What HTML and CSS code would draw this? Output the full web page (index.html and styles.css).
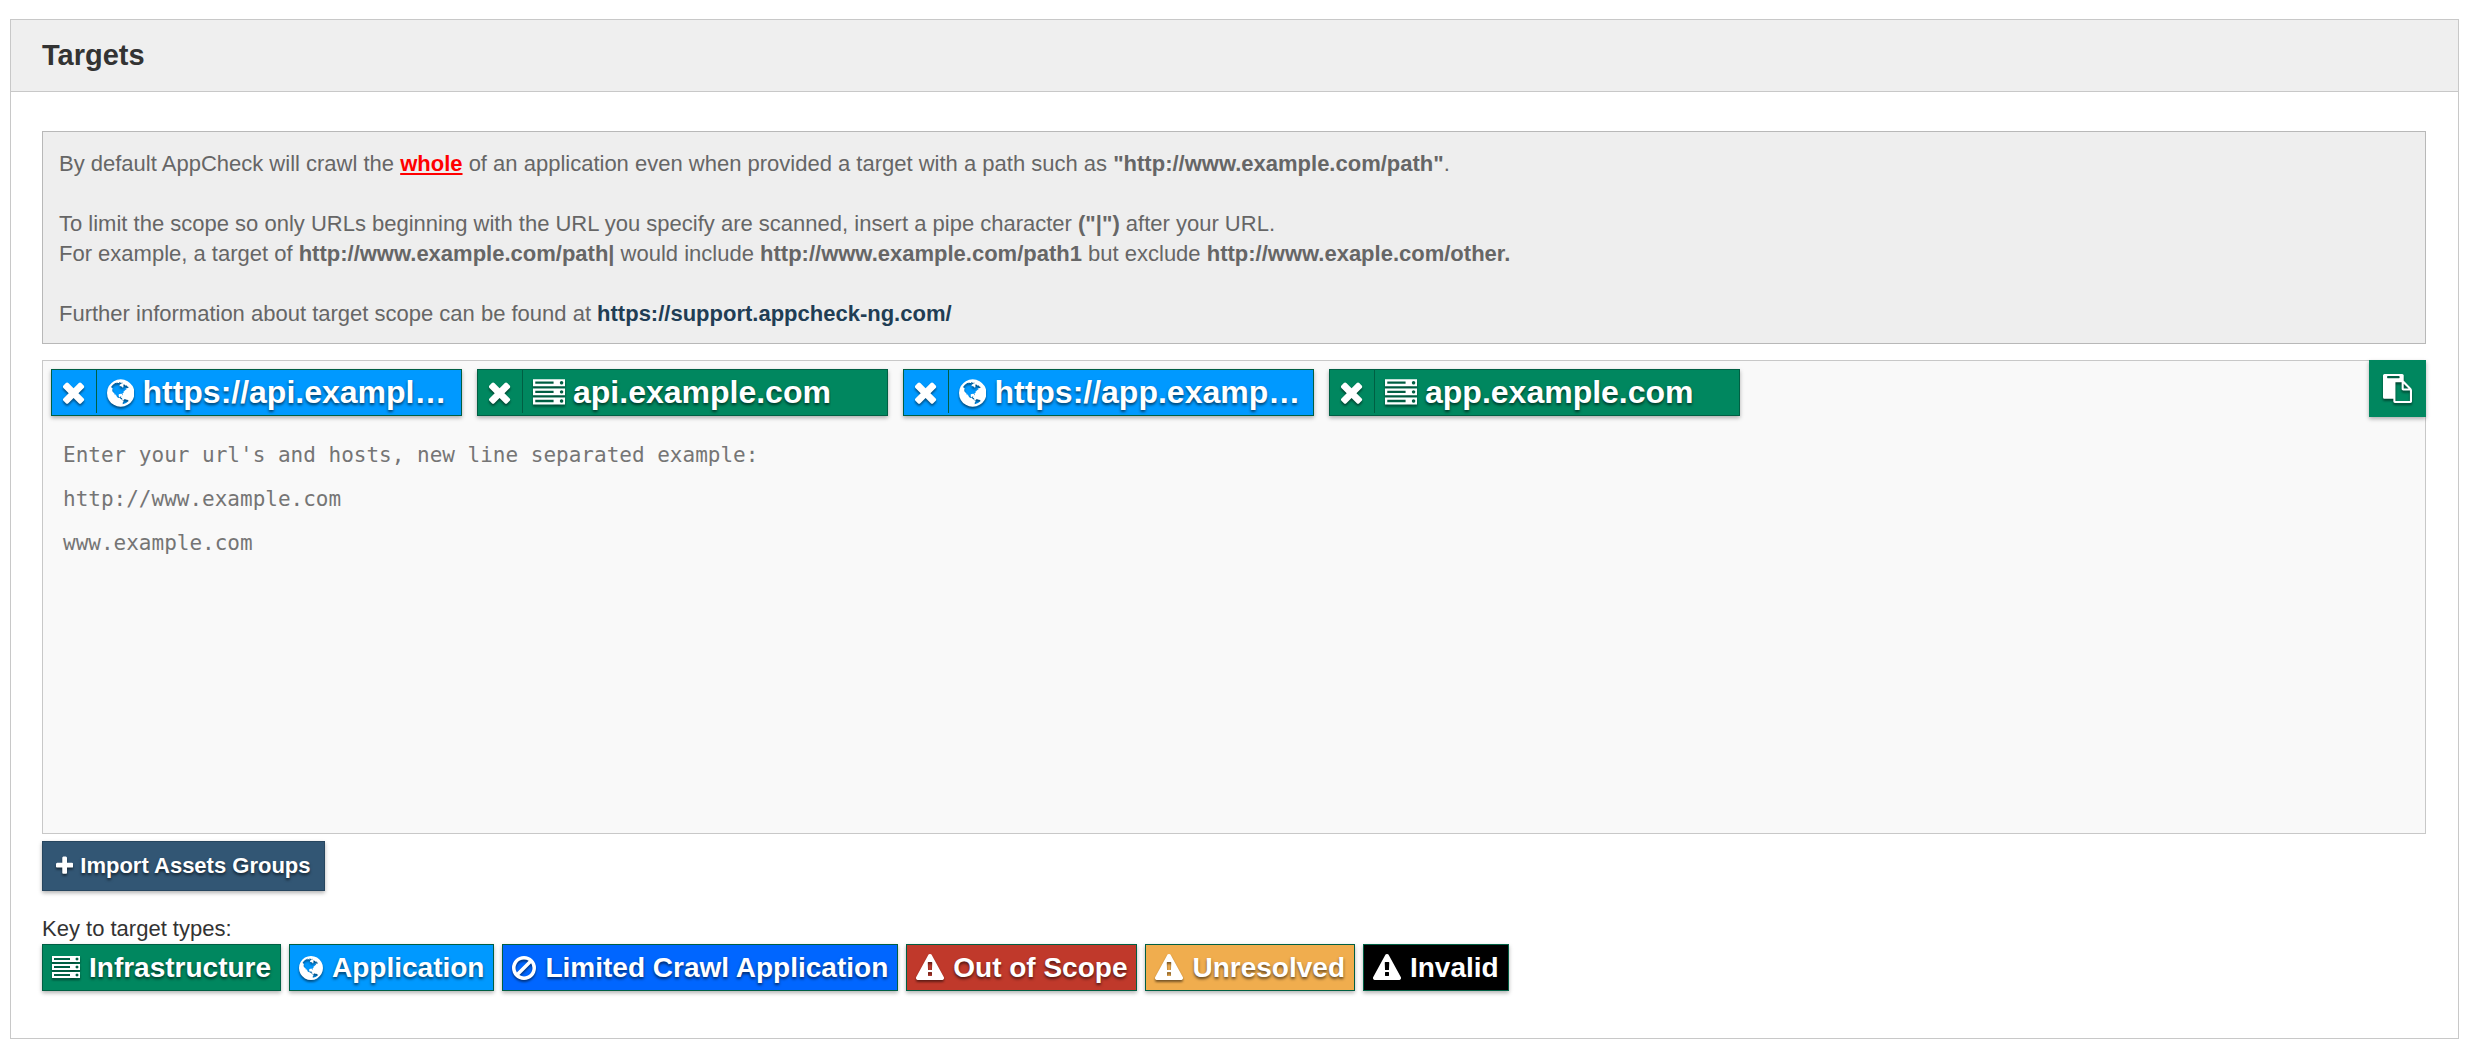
FILE: index.html
```html
<!DOCTYPE html>
<html lang="en">
  <head>
    <meta charset="UTF-8" />
    <meta name="viewport" content="width=device-width, initial-scale=1.0" />
    <title>Targets</title>
    <link rel="stylesheet" href="styles.css">
  </head>
  <body>
    <!-- Icon set -->
    <svg class="icon-defs" aria-hidden="true">
      <symbol id="i-times" viewBox="192 0 1408 1792"><path d="M1490 1322q0 40-28 68l-136 136q-28 28-68 28t-68-28l-294-294-294 294q-28 28-68 28t-68-28l-136-136q-28-28-28-68t28-68l294-294-294-294q-28-28-28-68t28-68l136-136q28-28 68-28t68 28l294 294 294-294q28-28 68-28t68 28l136 136q28 28 28 68t-28 68l-294 294 294 294q28 28 28 68z"/></symbol>
      <symbol id="i-plus" viewBox="192 0 1408 1792"><path d="M1600 736v192q0 40-28 68t-68 28h-416v416q0 40-28 68t-68 28h-192q-40 0-68-28t-28-68v-416h-416q-40 0-68-28t-28-68v-192q0-40 28-68t68-28h416v-416q0-40 28-68t68-28h192q40 0 68 28t28 68v416h416q40 0 68 28t28 68z"/></symbol>
      <symbol id="i-ban" viewBox="128 0 1536 1792"><path d="M1440 893q0-161-87-295l-754 753q137 89 297 89 111 0 211.500-43.500t173.500-116.500 116-174.500 43-212.500zm-999 299l755-754q-135-91-300-91-148 0-273 73t-198 199-73 274q0 162 89 299zm1223-299q0 157-61 300t-163.500 246-245 164-298.500 61-298.500-61-245-164-163.500-246-61-300 61-299.500 163.500-245.500 245-164 298.500-61 298.500 61 245 164 163.500 245.500 61 299.500z"/></symbol>
      <symbol id="i-warning" viewBox="0 0 1792 1792"><path d="M1024 1375v-190q0-14-9.500-23.500t-22.500-9.500h-192q-13 0-22.500 9.500t-9.500 23.500v190q0 14 9.500 23.500t22.500 9.500h192q13 0 22.500-9.500t9.500-23.500zm-2-374l18-459q0-12-10-19-13-11-24-11h-220q-11 0-24 11-10 7-10 21l17 457q0 10 10 16.500t24 6.500h185q14 0 23.500-6.500t10.500-16.500zm-14-934l768 1408q35 63-2 126-17 29-46.500 46t-63.500 17h-1536q-34 0-63.500-17t-46.500-46q-37-63-2-126l768-1408q17-31 47-49t65-18 65 18 47 49z"/></symbol>
      <symbol id="i-paste" viewBox="0 0 1792 1792"><path d="M768 1664h896v-640h-416q-40 0-68-28t-28-68v-416h-384v1152zm256-1440v-64q0-13-9.500-22.500t-22.500-9.500h-704q-13 0-22.500 9.500t-9.500 22.500v64q0 13 9.500 22.500t22.500 9.500h704q13 0 22.500-9.500t9.500-22.500zm256 672h299l-299-299v299zm512 128v672q0 40-28 68t-68 28h-960q-40 0-68-28t-28-68v-160h-544q-40 0-68-28t-28-68v-1344q0-40 28-68t68-28h1088q40 0 68 28t28 68v328q21 13 36 28l408 408q28 28 48 76t20 88z"/></symbol>
      <symbol id="i-server" viewBox="0 0 1792 1792"><path d="M128 1408h1024v-128h-1024v128zm0-512h1024v-128h-1024v128zm1568 448q0-40-28-68t-68-28-68 28-28 68 28 68 68 28 68-28 28-68zm-1568-960h1024v-128h-1024v128zm1568 448q0-40-28-68t-68-28-68 28-28 68 28 68 68 28 68-28 28-68zm0-512q0-40-28-68t-68-28-68 28-28 68 28 68 68 28 68-28 28-68zm96 832v384h-1792v-384h1792zm0-512v384h-1792v-384h1792zm0-512v384h-1792v-384h1792z"/></symbol>
      <symbol id="i-globe" viewBox="128 0 1536 1792"><path d="M896 128q209 0 385.500 103t279.500 279.500 103 385.500-103 385.500-279.500 279.500-385.500 103-385.500-103-279.500-279.500-103-385.500 103-385.500 279.500-279.500 385.500-103zm274 521q-2 1-9.500 9.500t-13.500 9.500q2 0 4.500-5t5-11 3.500-7q6-7 22-15 14-6 52-12 34-8 51 11-2-2 9.500-13t14.500-12q3-2 15-4.500t15-7.500l2-22q-12 1-17.500-7t-6.500-21q0 2-6 8 0-7-4.500-8t-11.500 1-9 1q-10-3-15-7.500t-8-16.500-4-15q-2-5-9.500-11t-9.500-10q-1-2-2.500-5.500t-3-6.500-4-5.500-5.500-2.500-7 5-7.500 10-4.500 5q-3-2-6-1.500t-4.500 1-4.500 3-5 3.500q-3 2-8.500 3t-8.500 2q15-5-1-11-10-4-16-3 9-4 7.500-12t-8.500-14h5q-1-4-8.500-8.500t-17.500-8.500-13-6q-8-5-34-9.500t-33-.5q-5 6-4.500 10.500t4 14 3.500 12.500q1 6-5.500 13t-6.500 12q0 7 14 15.500t10 21.500q-3 8-16 16t-16 12q-5 8-1.500 18.500t10.500 16.500q2 2 1.500 4t-3.500 4.500-5.500 4-6.500 3.500l-3 2q-11 5-20.500-6t-13.500-26q-7-25-16-30-23-8-29 1-5-13-41-26-25-9-58-4 6-1 0-15-7-15-19-12 3-6 4-17.500t1-13.500q3-13 12-23 1-1 7-8.500t9.500-13.500.5-6q35 4 50-11 5-5 11.500-17t10.500-17q9-6 14-5.500t14.500 5.500 14.500 5q14 1 15.500-11t-7.500-20q12 1 3-17-4-7-8-9-12-4-27 5-8 4 2 8-1-1-9.500 10.500t-16.500 17.500-16-5q-1-1-5.500-13.500t-9.500-13.500q-8 0-16 15 3-8-11-15t-24-8q19-12-8-27-7-4-20.500-5t-19.500 4q-5 7-5.500 11.500t5 8 10.500 5.500 11.500 4 8.500 3q14 10 8 14-2 1-8.500 3.500t-11.500 4.500-6 4q-3 4 0 14t-2 14q-5-5-9-17.500t-7-16.500q7 9-25 6l-10-1q-4 0-16 2t-20.500 1-13.500-8q-4-8 0-20 1-4 4-2-4-3-11-9.500t-10-8.500q-46 15-94 41 6 1 12-1 5-2 13-6.500t10-5.500q34-14 42-7l5-5q14 16 20 25-7-4-30-1-20 6-22 12 7 12 5 18-4-3-11.500-10t-14.500-11-15-5q-16 0-22 1-146 80-235 222 7 7 12 8 4 1 5 9t2.500 11 11.500-3q9 8 3 19 1-1 44 27 19 17 21 21 3 11-10 18-1-2-9-9t-9-4q-3 5 .5 18.500t10.500 12.500q-7 0-9.500 16t-2.500 35.500-1 23.500l2 1q-3 12 5.500 34.500t21.500 19.500q-13 3 20 43 6 8 8 9 3 2 12 7.500t15 10 10 10.500q4 5 10 22.500t14 23.500q-2 6 9.500 20t10.500 23q-1 0-2.500 1t-2.500 1q3 7 15.500 14t15.500 13q1 3 2 10t3 11 8 2q2-20-24-62-15-25-17-29-3-5-5.500-15.500t-4.500-14.500q2 0 6 1.500t8.500 3.500 7.500 4 2 3q-3 7 2 17.500t12 18.500 17 19 12 13q6 6 14 19.500t0 13.500q9 0 20 10t17 20q5 8 8 26t5 24q2 7 8.500 13.500t12.500 9.500l16 8 13 7q5 2 18.500 10.500t21.500 11.500q10 4 16 4t14.500-2.500 13.500-3.500q15-2 29 15t21 21q36 19 55 11-2 1 .5 7.500t8 15.500 9 14.500 5.500 8.500q5 6 18 15t18 15q6-4 7-9-3 8 7 20t18 10q14-3 14-32-31 15-49-18 0-1-2.500-5.500t-4-8.500-2.500-8.500 0-7.500 5-3q9 0 10-3.500t-2-12.500-4-13q-1-8-11-20t-12-15q-5 9-16 8t-16-9q0 1-1.500 5.500t-1.500 6.500q-13 0-15-1 1-3 2.500-17.500t3.500-22.500q1-4 5.500-12t7.500-14.500 4-12.500-4.500-9.500-17.500-2.500q-19 1-26 20-1 3-3 10.500t-5 11.500-9 7q-7 3-24 2t-24-5q-13-8-22.500-29t-9.500-37q0-10 2.500-26.500t3-25-5.500-24.500q3-2 9-9.500t10-10.500q2-1 4.500-1.500t4.500 0 4-1.500 3-6q-1-1-4-3-3-3-4-3 7 3 28.500-1.500t27.500 1.500q15 11 22-2 0-1-2.500-9.500t-.5-13.500q5 27 29 9 3 3 15.500 5t17.500 5q3 2 7 5.500t5.500 4.500 5-.5 8.500-6.500q10 14 12 24 11 40 19 44 7 3 11 2t4.500-9.500 0-14-1.500-12.500l-1-8v-18l-1-8q-15-3-18.500-12t1.500-18.500 15-18.500q1-1 8-3.500t15.500-6.500 12.500-8q21-19 15-35 7 0 11-9-1 0-5-3t-7.500-5-4.500-2q9-5 2-16 5-3 7.500-11t7.500-10q9 12 21 2 7-8 1-16 5-7 20.500-10.500t18.500-9.500q7 2 8-2t1-12 3-12q4-5 15-9t13-5l17-11q3-4 0-4 18 2 31-11 10-11-6-20 3-6-3-9.500t-15-5.500q3-1 11.500-.5t10.500-1.500q15-10-7-16-17-5-43 12zm-163 877q206-36 351-189-3-3-12.500-4.500t-12.500-3.500q-18-7-24-8 1-7-2.500-13t-8-9-12.500-8-11-7q-2-2-7-6t-7-5.500-7.500-4.500-8.500-2-10 1l-3 1q-3 1-5.500 2.500t-5.500 3-4 3 0 2.500q-21-17-36-22-5-1-11-5.500t-10.500-7-10-1.500-11.500 7q-5 5-6 15t-2 13q-7-5 0-17.500t2-18.500q-3-6-10.500-4.500t-12 4.500-11.500 8.500-9 6.500-8.500 5.500-8.500 7.500q-3 4-6 12t-5 11q-2-4-11.500-6.500t-9.500-5.500q2 10 4 35t5 38q7 31-12 48-27 25-29 40-4 22 12 26 0 7-8 20.500t-7 21.500q0 6 2 16z"/></symbol>
    </svg>

    <section class="panel">
      <header class="panel-header">
        <h2>Targets</h2>
      </header>
      <div class="panel-body">
        <div class="info">
          <p>By default AppCheck will crawl the <strong class="warn">whole</strong> of an application even when provided a target with a path such as <strong>"http://www.example.com/path"</strong>.</p>
          <p>To limit the scope so only URLs beginning with the URL you specify are scanned, insert a pipe character <strong>("|")</strong> after your URL.<br />
          For example, a target of <strong>http://www.example.com/path|</strong> would include <strong>http://www.example.com/path1</strong> but exclude <strong>http://www.exaple.com/other.</strong></p>
          <p>Further information about target scope can be found at <a href="https://support.appcheck-ng.com/">https://support.appcheck-ng.com/</a></p>
        </div>

        <div class="targets">
          <ul class="tags">
            <li class="tag application" title="https://api.example.com">
              <button type="button" aria-label="Remove"><svg class="icon narrow"><use href="#i-times"/></svg></button>
              <svg class="icon round"><use href="#i-globe"/></svg>
              <span>https://api.exampl…</span>
            </li>
            <li class="tag infrastructure" title="api.example.com">
              <button type="button" aria-label="Remove"><svg class="icon narrow"><use href="#i-times"/></svg></button>
              <svg class="icon"><use href="#i-server"/></svg>
              <span>api.example.com</span>
            </li>
            <li class="tag application" title="https://app.example.com">
              <button type="button" aria-label="Remove"><svg class="icon narrow"><use href="#i-times"/></svg></button>
              <svg class="icon round"><use href="#i-globe"/></svg>
              <span>https://app.examp…</span>
            </li>
            <li class="tag infrastructure" title="app.example.com">
              <button type="button" aria-label="Remove"><svg class="icon narrow"><use href="#i-times"/></svg></button>
              <svg class="icon"><use href="#i-server"/></svg>
              <span>app.example.com</span>
            </li>
          </ul>
          <textarea aria-label="Targets" spellcheck="false" placeholder="Enter your url's and hosts, new line separated example:
http://www.example.com
www.example.com"></textarea>
          <button type="button" class="paste" aria-label="Paste targets"><svg class="icon"><use href="#i-paste"/></svg></button>
        </div>

        <button type="button" class="import"><svg class="icon narrow"><use href="#i-plus"/></svg>Import Assets Groups</button>

        <p class="key-title">Key to target types:</p>
        <ul class="key">
          <li class="infrastructure"><svg class="icon"><use href="#i-server"/></svg>Infrastructure</li>
          <li class="application"><svg class="icon round"><use href="#i-globe"/></svg>Application</li>
          <li class="limited"><svg class="icon round"><use href="#i-ban"/></svg>Limited Crawl Application</li>
          <li class="out-of-scope"><svg class="icon"><use href="#i-warning"/></svg>Out of Scope</li>
          <li class="unresolved"><svg class="icon"><use href="#i-warning"/></svg>Unresolved</li>
          <li class="invalid"><svg class="icon"><use href="#i-warning"/></svg>Invalid</li>
        </ul>
      </div>
    </section>
  </body>
</html>
```

FILE: styles.css
```css
:root {
  --border: #c8c8c8;
  --green: #00875f;
  --green-dark: #005f43;
  --blue: #0099ff;
  --shadow: 0 2px 4px rgba(0, 0, 0, 0.3);
  --text-shadow: 0 2px 3px rgba(0, 0, 0, 0.6);
}

* {
  box-sizing: border-box;
}

body {
  margin: 19px 9px 19px 10px;
  background: #fff;
  color: #333;
  font-family: Arial, "Liberation Sans", sans-serif;
  font-size: 22px;
  line-height: 30px;
}

h2,
p,
ul {
  margin: 0;
  padding: 0;
}

ul {
  list-style: none;
}

button {
  margin: 0;
  font: inherit;
  color: #fff;
  cursor: pointer;
}

.icon-defs {
  position: absolute;
  width: 0;
  height: 0;
}

/* Icons scale with the font size of their parent */
.icon {
  flex: none;
  width: 1em;
  height: 1em;
  fill: currentColor;
  filter: drop-shadow(0 2px 1px rgba(0, 0, 0, 0.5));

  &.narrow {
    width: 0.786em;
  }

  &.round {
    width: 0.857em;
  }
}

.panel {
  border: 1px solid var(--border);
}

.panel-header {
  padding: 20px 31px;
  background: #efefef;
  border-bottom: 1px solid var(--border);

  h2 {
    font-size: 29px;
    line-height: 31px;
  }
}

.panel-body {
  padding: 39px 32px 47px 31px;
}

.info {
  padding: 17px 16px 14px;
  background: #eee;
  border: 1px solid #b8b8b8;
  color: #666;

  p + p {
    margin-top: 30px;
  }

  .warn {
    color: #f00;
    text-decoration: underline;
  }

  a {
    color: #213d54;
    font-weight: bold;
    text-decoration: none;
  }
}

.targets {
  position: relative;
  margin-top: 16px;
  background: #f9f9f9;
  border: 1px solid var(--border);

  textarea {
    display: block;
    width: 100%;
    height: 417px;
    padding: 17px 20px;
    background: none;
    border: 0;
    outline: 0;
    resize: none;
    font: 21px/44px "DejaVu Sans Mono", monospace;

    &::placeholder {
      color: #757575;
    }
  }
}

.tags {
  display: flex;
  flex-wrap: wrap;
  gap: 15px;
  padding: 8px 72px 0 8px;
}

.infrastructure { background: var(--green); }
.application { background: var(--blue); }
.limited { background: #0066ff; }
.out-of-scope { background: #c0392b; }
.unresolved { background: #f0ad4e; }
.invalid { background: #000; }

.tag {
  display: flex;
  align-items: center;
  width: 411px;
  height: 47px;
  padding-right: 8px;
  border: 1px solid var(--green-dark);
  box-shadow: var(--shadow);
  color: #fff;
  font-size: 32px;
  font-weight: bold;
  text-shadow: var(--text-shadow);

  button {
    display: flex;
    flex: none;
    align-items: center;
    justify-content: center;
    align-self: stretch;
    width: 45px;
    margin: 0 10px 2px 0;
    padding: 0;
    background: none;
    border: 0;
    border-right: 1px solid var(--green-dark);
  }

  span {
    min-width: 0;
    padding-left: 8px;
    line-height: 45px;
    overflow: hidden;
    text-overflow: ellipsis;
    white-space: nowrap;
  }
}

/* Sits over the top right corner of the box */
.paste {
  position: absolute;
  top: -1px;
  right: -1px;
  display: flex;
  align-items: center;
  justify-content: center;
  width: 57px;
  height: 57px;
  padding: 0;
  background: var(--green);
  border: 0;
  box-shadow: var(--shadow);
  font-size: 29px;
}

.import {
  display: flex;
  align-items: center;
  gap: 7px;
  height: 50px;
  margin-top: 7px;
  padding: 0 13px;
  background: #325674;
  border: 1px solid #27465f;
  box-shadow: var(--shadow);
  font-weight: bold;
  text-shadow: var(--text-shadow);
}

.key-title {
  margin-top: 23px;
}

.key {
  display: flex;
  flex-wrap: wrap;
  gap: 8px;

  li {
    display: flex;
    align-items: center;
    gap: 9px;
    height: 47px;
    padding: 0 9px;
    border: 1px solid var(--green-dark);
    box-shadow: var(--shadow);
    color: #fff;
    font-size: 28px;
    font-weight: bold;
    text-shadow: var(--text-shadow);
  }
}
```
